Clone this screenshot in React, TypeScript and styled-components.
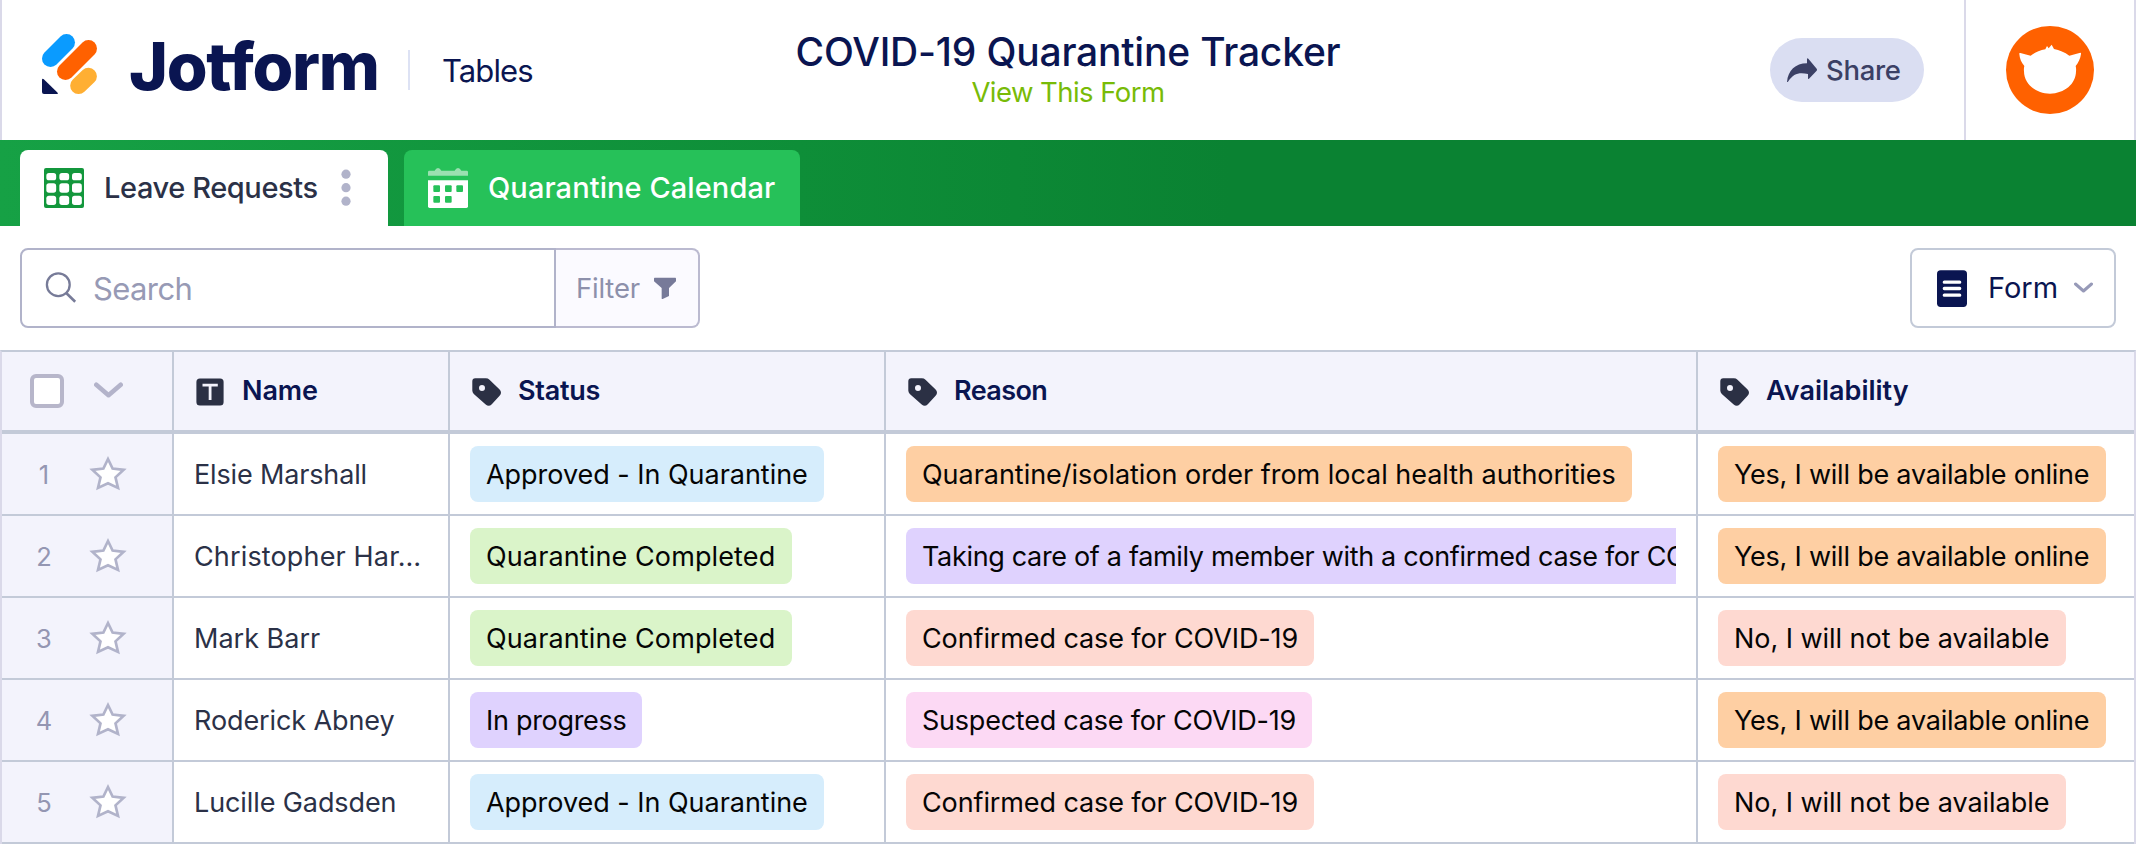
import React from "react";
import styled, { createGlobalStyle } from "styled-components";

const NAVY = "#0a1551";
const LINE = "#c3cad8";
const EDGE = "#dad9e9";
const MUTED = "#b1b3ca";

const Global = createGlobalStyle`
  * { box-sizing: border-box; }
  body {
    margin: 0;
    background: #fff;
    font-family: Inter, "Liberation Sans", sans-serif;
    -webkit-font-smoothing: antialiased;
  }
  svg { display: block; flex: none; }
`;

const Page = styled.div`
  width: 2136px;
  height: 844px;
  overflow: hidden;
  display: flex;
  flex-direction: column;
`;

const Label = styled.span<{ $size: number; $weight?: number; $color: string; $track?: number; $drop?: number }>`
  padding-top: ${(p) => p.$drop ?? 0}px;
  font-size: ${(p) => p.$size}px;
  font-weight: ${(p) => p.$weight ?? 400};
  color: ${(p) => p.$color};
  letter-spacing: ${(p) => p.$track ?? 0}px;
  line-height: 40px;
  white-space: nowrap;
`;

/* Header */

const Header = styled.header`
  height: 140px;
  display: grid;
  grid-template-columns: 1fr auto 1fr;
  align-items: stretch;
  border-left: 2px solid ${EDGE};
  border-right: 2px solid ${EDGE};
`;

const Brand = styled.div`
  display: flex;
  align-items: center;
  padding-left: 40px;
`;

const LogoMarkWrap = styled.div`
  margin-top: -12px;
`;

const Wordmark = styled.span`
  margin: 0 0 8px 32px;
  width: 249px;
  font-size: 66px;
  font-weight: 800;
  line-height: 66px;
  letter-spacing: -1.25px;
  color: ${NAVY};
`;

const Divider = styled.i`
  width: 2px;
  height: 40px;
  margin: 0 32px 0 30px;
  background: #dde2f4;
`;

const TitleBlock = styled.div`
  display: flex;
  flex-direction: column;
  align-items: center;
  padding-top: 32px;
`;

const Actions = styled.div`
  display: flex;
  align-items: center;
  justify-content: flex-end;
`;

const ShareButton = styled.button`
  width: 154px;
  height: 64px;
  margin-right: 40px;
  padding: 0 0 0 17px;
  display: flex;
  align-items: center;
  gap: 9px;
  border: 0;
  border-radius: 32px;
  background: #dadef2;
  font-family: inherit;
`;

const AvatarCell = styled.div`
  width: 170px;
  align-self: stretch;
  display: flex;
  align-items: center;
  justify-content: center;
  border-left: 2px solid ${EDGE};
`;

/* Tabs */

const TabBar = styled.nav`
  height: 86px;
  padding: 10px 20px 0;
  display: flex;
  gap: 16px;
  background: linear-gradient(90deg, #16a145 0, #0e8e38 800px, #0a8232 1230px);
`;

const Tab = styled.div<{ $active?: boolean; $width: number }>`
  width: ${(p) => p.$width}px;
  height: 76px;
  padding-left: 24px;
  display: flex;
  align-items: center;
  border-radius: 8px 8px 0 0;
  background: ${(p) => (p.$active ? "#fff" : "#26c159")};
`;

const TabLabel = styled(Label)`
  margin-left: 20px;
  flex: 1;
`;

const DotsWrap = styled.div`
  margin-right: 37px;
`;

/* Toolbar */

const Toolbar = styled.div`
  height: 124px;
  padding: 0 20px;
  display: flex;
  align-items: center;
  justify-content: space-between;
`;

const SearchGroup = styled.div`
  display: flex;
  height: 80px;
`;

const SearchBox = styled.div`
  width: 536px;
  padding-left: 23px;
  display: flex;
  align-items: center;
  gap: 16px;
  border: 2px solid ${MUTED};
  border-radius: 8px 0 0 8px;
`;

const FilterButton = styled.div`
  width: 144px;
  padding-left: 20px;
  display: flex;
  align-items: center;
  gap: 14px;
  border: 2px solid #bbbad0;
  border-left: 0;
  border-radius: 0 8px 8px 0;
  background: #fbfaff;
`;

const FormButton = styled.div`
  width: 206px;
  height: 80px;
  padding-left: 25px;
  display: flex;
  align-items: center;
  border: 2px solid ${LINE};
  border-radius: 8px;
`;

const FormLabel = styled(Label)`
  margin: 0 16px 0 21px;
  width: 70px;
`;

/* Table */

const Table = styled.div`
  border: 2px solid ${EDGE};
  border-top-color: ${LINE};
  border-bottom: 0;
`;

const Row = styled.div<{ $head?: boolean }>`
  display: grid;
  grid-template-columns: 172px 276px 436px 812px 436px;
  height: 82px;
  border-bottom: ${(p) => (p.$head ? 4 : 2)}px solid ${LINE};
  background: ${(p) => (p.$head ? "#f3f3fc" : "#fff")};
`;

const Cell = styled.div<{ $last?: boolean }>`
  min-width: 0;
  display: flex;
  align-items: center;
  padding: 0 20px;
  border-right: ${(p) => (p.$last ? 0 : 2)}px solid ${LINE};
`;

const Clip = styled.div`
  flex: 1;
  min-width: 0;
  overflow: hidden;
`;

const IndexCell = styled.div`
  display: flex;
  align-items: center;
  border-right: 2px solid ${LINE};
  background: #f3f3fc;
`;

const RowNumber = styled(Label)`
  width: 84px;
  text-align: center;
`;

const Checkbox = styled.i`
  width: 34px;
  height: 34px;
  margin: 0 30px 0 28px;
  border: 4px solid #b7b6ca;
  border-radius: 6px;
  background: #fff;
`;

const HeadLabel = styled(Label)`
  margin-left: 16px;
`;

const Badge = styled.div<{ $bg: string; $width: number; $track: number }>`
  width: ${(p) => p.$width}px;
  height: 56px;
  padding-left: 16px;
  border-radius: 8px;
  background: ${(p) => p.$bg};
  color: #050505;
  font-size: 27px;
  line-height: 58px;
  letter-spacing: ${(p) => p.$track}px;
  white-space: nowrap;
`;

/* Icons */

const LogoMark = () => (
  <svg width="55" height="60" viewBox="42 34 55 60" fill="none" strokeWidth="17" strokeLinecap="round">
    <path d="M50.5 58.5 66.5 42.5" stroke="#0a9bff" />
    <path d="M65.5 71.5 88.5 48.5" stroke="#ff6100" />
    <path d="M78.6 85.6 88.5 76.2" stroke="#ffaf33" strokeWidth="16.8" />
    <path d="M42 80.2Q42 78 43.8 79.3L57.4 92.4Q58.6 94 56.6 94H44Q42 94 42 92Z" fill={NAVY} />
  </svg>
);

const ShareArrow = () => (
  <svg width="30" height="24" viewBox="153 174 90 72">
    <path
      d="M153 246C156 212 178 190 213 190V176Q214 173 217 176L242 206Q244 209 242 212L219 236Q216 239 216 235V222C190 216 172 220 157 244Q154 248 153 246Z"
      fill="#3b4065"
    />
  </svg>
);

const Avatar = () => (
  <svg width="88" height="88" viewBox="108 18 264 264">
    <circle cx="240" cy="150" r="132" fill="#ff6100" />
    <path
      d="M182 107C195 97 210 91 226 88L231 78 236 85 245 74 252 87C268 90 284 97 298 107L331 98Q334 98 333 102C331 116 325 129 317 138Q319 146 318 154C318 192 283 221 240 221S162 192 162 154Q161 146 163 138C154 128 149 116 148 102Q147 98 151 99Z"
      fill="#fff"
    />
  </svg>
);

const GridIcon = () => (
  <svg width="40" height="40" viewBox="132 114 120 120">
    <rect x="132" y="114" width="120" height="120" rx="6" fill="#13973c" />
    {[139, 178, 216].map((x) =>
      [[129, 22], [160, 28], [197, 28]].map(([y, h]) => (
        <rect key={`${x}-${y}`} x={x} y={y} width="29.5" height={h} rx="8" fill="#fff" />
      )),
    )}
  </svg>
);

const DotsIcon = () => (
  <svg width="10" height="38" viewBox="0 0 10 38" fill={MUTED}>
    <circle cx="5" cy="5.2" r="4.6" />
    <circle cx="5" cy="18.7" r="4.6" />
    <circle cx="5" cy="32.2" r="4.6" />
  </svg>
);

const CalendarIcon = () => (
  <svg width="40" height="40" viewBox="114 114 120 120">
    <path
      d="M118 122H134Q138 114 144 114T154 122H194Q198 114 204 114T214 122H230Q234 122 234 126V137H114V126Q114 122 118 122Z"
      fill="#9be0b1"
    />
    <path d="M114 151H234V229Q234 234 229 234H119Q114 234 114 229Z" fill="#fff" />
    {[[130, 166], [165, 166], [199, 166], [130, 198], [165, 198]].map(([x, y]) => (
      <rect key={`${x}-${y}`} x={x} y={y} width="20" height="20" rx="3" fill="#26c159" />
    ))}
  </svg>
);

const SearchIcon = () => (
  <svg width="32" height="32" viewBox="0 0 32 32" fill="none" stroke="#777b98" strokeWidth="2.3">
    <circle cx="13.3" cy="12.7" r="11.4" />
    <path d="M21.2 21 30.2 29.8" strokeWidth="2.6" />
  </svg>
);

const FunnelIcon = () => (
  <svg width="22" height="22" viewBox="792 443 66 66">
    <path
      d="M794 445H856Q858 445 858 448V456L837 476V500L818 509Q815 510 815 507V476L792 456V448Q792 445 794 445Z"
      fill="#777a99"
    />
  </svg>
);

const FormIcon = () => (
  <svg width="30" height="37" viewBox="303 118 90 111">
    <rect x="303" y="119" width="90" height="110" rx="11" fill={NAVY} />
    <path d="M325 154.5H371M325 173.5H371M325 193.5H371" stroke="#fff" strokeWidth="10" strokeLinecap="round" />
  </svg>
);

const Chevron = ({ width, color, stroke }: { width: number; color: string; stroke: number }) => (
  <svg
    width={width}
    height={width / 2 + 3}
    viewBox={`0 0 ${width} ${width / 2 + 3}`}
    fill="none"
    stroke={color}
    strokeWidth={stroke}
    strokeLinecap="round"
    strokeLinejoin="round"
  >
    <path
      d={`M${stroke / 2} ${stroke / 2 + 0.5}L${width / 2} ${width / 2 - stroke / 2 + 1}L${width - stroke / 2} ${stroke / 2 + 0.5}`}
    />
  </svg>
);

const TextIcon = () => (
  <svg width="32" height="30" viewBox="0 -2 32 30">
    <rect x="2.4" y="0.5" width="27.2" height="27" rx="3.5" fill="#2b3044" />
    <path d="M8.5 7.2H23.8M16.1 7.2V22" stroke="#f3f3fc" strokeWidth="2.8" fill="none" />
  </svg>
);

const TagIcon = () => (
  <svg width="32" height="30" viewBox="0 -2 32 30">
    <path
      fillRule="evenodd"
      d="M5.3 .3H15.8Q18 .3 19.5 1.7L29.6 11.6Q32.400 14.800 29.600 17.800L21.800 26.200Q18.900 29.200 15.700 26.600L3.800 15.900Q2.300 14.500 2.300 12.600V3.300Q2.300 .3 5.300 .3ZM12 7A3 3 0 1 0 12 13A3 3 0 1 0 12 7Z"
      fill="#2b3044"
    />
  </svg>
);

const StarIcon = () => (
  <svg width="44" height="40" viewBox="-66 -62 132 120">
    <path
      d="M0-47 13.8-18.5 47-14.5 22.5 8 30 40 0 26-30 40-22.5 8-47-14.5-13.8-18.5Z"
      fill="#fff"
      stroke={MUTED}
      strokeWidth="8"
    />
  </svg>
);

/* Data */

type BadgeSpec = { text: string; bg: string; width: number; track: number };

const approved: BadgeSpec = { text: "Approved - In Quarantine", bg: "#d6edfc", width: 354, track: -0.03 };
const completed: BadgeSpec = { text: "Quarantine Completed", bg: "#daf4c9", width: 322, track: 0.12 };
const progress: BadgeSpec = { text: "In progress", bg: "#dfd2fe", width: 172, track: -0.3 };
const order: BadgeSpec = {
  text: "Quarantine/isolation order from local health authorities",
  bg: "#fecfa3",
  width: 726,
  track: -0.03,
};
const caring: BadgeSpec = {
  text: "Taking care of a family member with a confirmed case for COVID-19",
  bg: "#dfd2fe",
  width: 900,
  track: -0.33,
};
const confirmed: BadgeSpec = { text: "Confirmed case for COVID-19", bg: "#fed9d1", width: 408, track: -0.11 };
const suspected: BadgeSpec = { text: "Suspected case for COVID-19", bg: "#fcd9f4", width: 406, track: -0.23 };
const online: BadgeSpec = { text: "Yes, I will be available online", bg: "#fecfa3", width: 388, track: -0.22 };
const unavailable: BadgeSpec = { text: "No, I will not be available", bg: "#fed9d1", width: 348, track: -0.04 };

const rows: { name: string; track: number; badges: BadgeSpec[] }[] = [
  { name: "Elsie Marshall", track: -0.15, badges: [approved, order, online] },
  { name: "Christopher Har…", track: 0.15, badges: [completed, caring, online] },
  { name: "Mark Barr", track: 0, badges: [completed, confirmed, unavailable] },
  { name: "Roderick Abney", track: -0.1, badges: [progress, suspected, online] },
  { name: "Lucille Gadsden", track: -0.1, badges: [approved, confirmed, unavailable] },
];

const columns = [
  { title: "Name", Icon: TextIcon, track: -0.1 },
  { title: "Status", Icon: TagIcon, track: -0.25 },
  { title: "Reason", Icon: TagIcon, track: -0.6 },
  { title: "Availability", Icon: TagIcon, track: 0 },
];

export default function App() {
  return (
    <Page>
      <Global />
      <Header>
        <Brand>
          <LogoMarkWrap>
            <LogoMark />
          </LogoMarkWrap>
          <Wordmark>Jotform</Wordmark>
          <Divider />
          <Label $size={31} $color={NAVY} $track={-0.9} $drop={2}>Tables</Label>
        </Brand>
        <TitleBlock>
          <Label $size={39} $weight={500} $color={NAVY} $track={-0.2}>COVID-19 Quarantine Tracker</Label>
          <Label $size={27.5} $color="#78bb07" $track={-0.55}>View This Form</Label>
        </TitleBlock>
        <Actions>
          <ShareButton>
            <ShareArrow />
            <Label $size={27.5} $weight={500} $color="#3b4065" $track={-0.3}>Share</Label>
          </ShareButton>
          <AvatarCell>
            <Avatar />
          </AvatarCell>
        </Actions>
      </Header>

      <TabBar>
        <Tab $active $width={368}>
          <GridIcon />
          <TabLabel $size={29} $weight={500} $color="#2b3147" $track={-0.4}>Leave Requests</TabLabel>
          <DotsWrap>
            <DotsIcon />
          </DotsWrap>
        </Tab>
        <Tab $width={396}>
          <CalendarIcon />
          <TabLabel $size={29} $weight={500} $color="#fff" $track={0.08}>Quarantine Calendar</TabLabel>
        </Tab>
      </TabBar>

      <Toolbar>
        <SearchGroup>
          <SearchBox>
            <SearchIcon />
            <Label $size={31} $color="#979ab5" $track={-0.6} $drop={2}>Search</Label>
          </SearchBox>
          <FilterButton>
            <Label $size={27.5} $color="#8d90ab" $track={-0.2}>Filter</Label>
            <FunnelIcon />
          </FilterButton>
        </SearchGroup>
        <FormButton>
          <FormIcon />
          <FormLabel $size={29} $color={NAVY}>Form</FormLabel>
          <Chevron width={19} color="#979ab8" stroke={3} />
        </FormButton>
      </Toolbar>

      <Table>
        <Row $head>
          <IndexCell>
            <Checkbox />
            <Chevron width={29} color="#b3b3ca" stroke={4.6} />
          </IndexCell>
          {columns.map(({ title, Icon, track }, i) => (
            <Cell key={title} $last={i === columns.length - 1}>
              <Icon />
              <HeadLabel $size={27} $weight={600} $color={NAVY} $track={track}>{title}</HeadLabel>
            </Cell>
          ))}
        </Row>
        {rows.map((row, i) => (
          <Row key={row.name}>
            <IndexCell>
              <RowNumber $size={25.5} $color="#9496b2" $drop={2}>{i + 1}</RowNumber>
              <StarIcon />
            </IndexCell>
            <Cell>
              <Label $size={27} $color="#2b3147" $track={row.track} $drop={2}>{row.name}</Label>
            </Cell>
            {row.badges.map((b, j) => (
              <Cell key={j} $last={j === 2}>
                <Clip>
                  <Badge $bg={b.bg} $width={b.width} $track={b.track}>{b.text}</Badge>
                </Clip>
              </Cell>
            ))}
          </Row>
        ))}
      </Table>
    </Page>
  );
}
